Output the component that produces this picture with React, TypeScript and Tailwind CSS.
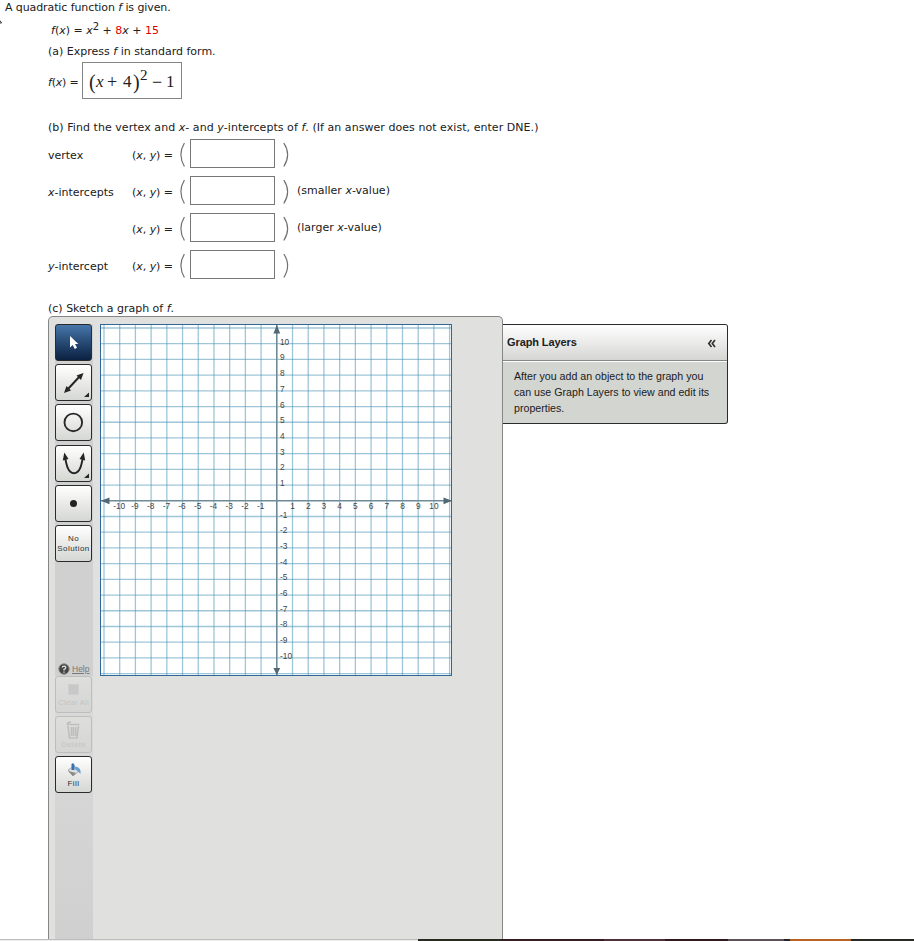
import type { ReactNode } from 'react';

const STEP = 15.71;
const CX = 176.8;
const CY = 176.8;
const TICKS = [-11, -10, -9, -8, -7, -6, -5, -4, -3, -2, -1, 1, 2, 3, 4, 5, 6, 7, 8, 9, 10, 11];

function Graph() {
  const labels = TICKS.filter((n) => Math.abs(n) < 11);
  return (
    <svg width="352" height="352" className="block shrink-0 bg-white">
      {TICKS.map((n) => (
        <g key={n} stroke="#4f97b8" strokeOpacity="0.55" strokeWidth="1.3">
          <line x1={CX + n * STEP} x2={CX + n * STEP} y1="0" y2="352" />
          <line y1={CY - n * STEP} y2={CY - n * STEP} x1="0" x2="352" />
        </g>
      ))}
      <g stroke="#6f8b97" strokeWidth="1.6">
        <line x1={CX} x2={CX} y1="0" y2="352" />
        <line y1={CY} y2={CY} x1="0" x2="352" />
      </g>
      <g fill="#526872">
        <path d="M1 176.8 L9.5 173.4 V180.2 Z" />
        <path d="M352 176.8 L343.5 173.4 V180.2 Z" />
        <path d="M176.8 1 L173.4 9.5 H180.2 Z" />
        <path d="M176.8 351 L173.4 344 H180.2 Z" />
      </g>
      <g fill="#444444" fontSize="8.3" fontFamily="'Liberation Sans', sans-serif">
        {labels.map((n) => (
          <text key={`x${n}`} x={CX + n * STEP + (n < 0 ? -0.5 : 0)} y="185.2" textAnchor="middle">
            {n}
          </text>
        ))}
        {labels.map((n) => (
          <text key={`y${n}`} x="180" y={CY - n * STEP + 1}>
            {n}
          </text>
        ))}
      </g>
      <rect x="0.5" y="0.5" width="351" height="351" fill="none" stroke="#2f6898" />
    </svg>
  );
}

function Tool({ children, className = '' }: { children: ReactNode; className?: string }) {
  return (
    <button
      className={`flex h-[37px] w-[37px] shrink-0 flex-col items-center justify-center rounded-[3px] border border-[#292b2c] bg-linear-to-b from-white to-[#d5d7d3] ${className}`}
    >
      {children}
    </button>
  );
}

function Row({ label, note }: { label?: ReactNode; note?: ReactNode }) {
  return (
    <div className="flex h-[37px] items-start">
      <div className="w-[84px] pt-[11px] leading-[20px]">{label}</div>
      <div className="w-[47px] pt-[11px] leading-[20px] tracking-[-0.05px]">
        (<i>x</i>, <i>y</i>) =
      </div>
      <svg width="11" height="37" className="shrink-0" fill="none" stroke="#707070" strokeWidth="1.2">
        <path d="M5.4 8 Q-1.6 19.5 5.4 31.5" />
      </svg>
      <input className="mt-[4px] h-[29px] w-[85px] border border-[#777] bg-white" />
      <svg width="22" height="37" className="shrink-0" fill="none" stroke="#707070" strokeWidth="1.2">
        <path d="M8.8 8 Q16.4 19.5 8.8 31.5" />
      </svg>
      <div className="pt-[9px] leading-[20px]">{note}</div>
    </div>
  );
}

export default function App() {
  return (
    <div className="flex h-[941px] w-[914px] flex-col overflow-hidden bg-white font-['DejaVu_Sans',sans-serif] text-[11px] text-[#202020]">
      <div className="h-[20px] whitespace-nowrap pl-[5px] leading-[15px] tracking-[-0.1px]">
        A quadratic function <i>f</i> is given.
      </div>
      <div className="flex h-[21px] items-start">
        <svg width="48" height="8" className="shrink-0">
          <path d="M0 0.5 L1.5 3 H0" fill="none" stroke="#333" />
        </svg>
        <div className="whitespace-pre pl-[3px] leading-[21px]">
          <i>f</i>(<i>x</i>) = <i>x</i>
          <span className="relative -top-[4px] text-[10px] leading-none">2</span> + <span className="text-[#e00000]">8</span>
          <i>x</i> + <span className="text-[#e00000]">15</span>
        </div>
      </div>
      <div className="h-[21px] pl-[48px] leading-[21px]">
        (a) Express <i>f</i> in standard form.
      </div>
      <div className="flex h-[56px] items-start pl-[48px]">
        <div className="w-[34px] whitespace-nowrap pt-[11px] leading-[20px] tracking-[-0.2px]">
          <i>f</i>(<i>x</i>) =
        </div>
        <div className="flex h-[37px] w-[100px] border border-[#858585] pl-[6px] font-['Liberation_Serif',serif] text-[17px] leading-[38px]">
          <span className="w-[7px] text-[20px]">(</span>
          <span className="w-[11px] italic">x</span>
          <span className="w-[16px] text-[18px]">+</span>
          <span className="w-[10px]">4</span>
          <span className="w-[7px] text-[20px]">)</span>
          <span className="w-[12px] text-[15px] leading-[25px]">2</span>
          <span className="w-[14px] text-[18px]">−</span>
          <span>1</span>
        </div>
      </div>
      <div className="h-[17px] whitespace-nowrap pl-[48px] leading-[20px] tracking-[0.05px]">
        (b) Find the vertex and <i>x</i>- and <i>y</i>-intercepts of <i>f</i>. (If an answer does not exist, enter DNE.)
      </div>
      <div className="flex h-[163px] flex-col whitespace-nowrap pl-[48px]">
        <Row label="vertex" />
        <Row label={<><i>x</i>-intercepts</>} note={<>(smaller <i>x</i>-value)</>} />
        <Row note={<>(larger <i>x</i>-value)</>} />
        <Row label={<><i>y</i>-intercept</>} />
      </div>
      <div className="h-[18px] pl-[48px] leading-[21px]">
        (c) Sketch a graph of <i>f</i>.
      </div>
      <div className="flex h-[623px] shrink-0 items-start pl-[48px]">
        <div className="flex h-[623px] w-[455px] shrink-0 rounded-t-[5px] border border-b-0 border-[#858787] bg-[#e0e0de] pl-[6px] pt-[7px]">
          <div className="mr-[7px] flex h-[615px] w-[38px] shrink-0 flex-col bg-[#d0d0d0] font-['Liberation_Sans',sans-serif]">
            <Tool className="from-[#4777ab]! to-[#0b2141]!">
              <svg width="35" height="35">
                <path d="M14 11 V22.5 L16.7 20 L18.8 24 L21 22.8 L19 19 H22.3 Z" fill="#fff" />
              </svg>
            </Tool>
            <Tool className="mt-[3px]">
              <svg width="35" height="35" fill="#252525">
                <path d="M11 25 L25 10" stroke="#252525" strokeWidth="2" />
                <path d="M8 28 L10.5 21 L15 25.5 Z M27.5 8 L25 15 L20.5 10.5 Z M33 27.5 V32 H28 Z" />
              </svg>
            </Tool>
            <Tool className="mt-[3px]">
              <svg width="35" height="35" fill="none">
                <circle cx="17.3" cy="17.4" r="8.8" stroke="#292929" strokeWidth="1.9" />
              </svg>
            </Tool>
            <Tool className="mt-[4px]">
              <svg width="35" height="35" fill="#252525">
                <path d="M9 11 C10.5 19 12 27.3 18 27.3 C24 27.3 25.5 19 27 11" fill="none" stroke="#252525" strokeWidth="1.9" />
                <path d="M8.3 6.5 L6.8 14.5 L12.5 13 Z M27.7 6.5 L23.5 13 L29.2 14.5 Z M33 27.5 V32 H28 Z" />
              </svg>
            </Tool>
            <Tool className="mt-[3px]">
              <span className="h-[7px] w-[7px] rounded-full bg-[#222]" />
            </Tool>
            <Tool className="mt-[3px] pt-[1px] text-[8px] leading-[10px] tracking-[0.45px] text-[#303030]">
              <span>No</span>
              <span>Solution</span>
            </Tool>
            <div className="mt-[101px] flex h-[12px] items-center pl-[3px] text-[8.5px] leading-[10px] text-[#777]">
              <svg width="12" height="12" className="mr-[2px]">
                <circle cx="6" cy="6" r="5.2" fill="#444" stroke="#888" />
                <path d="M4.2 4.7 Q4.4 3.1 6 3.1 Q8 3.2 7.7 4.8 Q7.5 5.8 6 6.3 V7.4 M6 8.5 V9.7" stroke="#ddd" fill="none" strokeWidth="1.3" />
              </svg>
              <span className="underline">Help</span>
            </div>
            <div className="mt-[1px] flex flex-1 flex-col bg-linear-to-b from-[#dadada] to-[#d0d0d0]">
              <Tool className="border-[#bdbfbf]! from-[#dededc]! to-[#d5d5d3]! text-[8px] leading-[10px] tracking-[0.1px] text-[#c5c5c5]">
                <span className="mb-[3px] mt-[2px] h-[11px] w-[11px] border border-[#cfcfcf] bg-[#c8c8c8]" />
                <span className="whitespace-nowrap">Clear All</span>
              </Tool>
              <Tool className="mt-[3px] border-[#bdbfbf]! from-[#dededc]! to-[#d5d5d3]! text-[8px] leading-[10px] tracking-[0.3px] text-[#c5c5c5]">
                <svg width="17" height="20" fill="none" stroke="#bebebe" strokeWidth="1.6">
                  <path d="M1.5 4.5 H14.5 M2 3 L6 2 M3 6 L4.5 18 H12 L13.5 6 M6.5 7 V16 M8.5 7 V16 M10.7 7 V16" />
                </svg>
                <span>Delete</span>
              </Tool>
              <Tool className="mt-[3px] pt-[2px] text-[8px] leading-[10px] tracking-[0.5px] text-[#303030]">
                <svg width="17" height="16">
                  <path d="M3 8 L9 4 L14 9 L8 14 Z" fill="#ddd" stroke="#888" strokeWidth="0.6" />
                  <path d="M3 9 L8 14 L11 11" fill="#888" />
                  <path d="M6.5 2 Q8.3 0 9.5 3 V8 H6.5 Z" fill="#3472b4" />
                  <path d="M10 4.5 Q16.5 5 15.5 12 L13 9.5 L10 7 Z" fill="#699fce" />
                </svg>
                <span className="mt-[1px]">Fill</span>
              </Tool>
            </div>
          </div>
          <Graph />
        </div>
        <div className="mt-[8px] h-[100px] w-[225px] overflow-hidden rounded-r-[3px] border border-l-0 border-[#292b2c] bg-[#d3d5d1] font-['Liberation_Sans',sans-serif] text-[#202020]">
          <div className="flex h-[36px] items-center justify-between border-b border-[#858787] bg-linear-to-b from-white to-[#d5d6d4] pl-[4px] pr-[11px] text-[11px] font-bold tracking-[-0.1px]">
            <span>Graph Layers</span>
            <svg width="9" height="9" className="mt-[2px]" fill="none" stroke="#333" strokeWidth="1.7">
              <path d="M4.5 1 L1.8 4.5 L4.5 8 M8 1 L5.3 4.5 L8 8" />
            </svg>
          </div>
          <div className="whitespace-nowrap border-t border-white pl-[11px] pt-[6px] text-[10.65px] leading-[16px]">
            <div>After you add an object to the graph you</div>
            <div>can use Graph Layers to view and edit its</div>
            <div>properties.</div>
          </div>
        </div>
      </div>
      <div className="flex h-[2px] shrink-0">
        <div className="w-[418px] border-t border-[#bcbcbc] bg-[#eee]" />
        <div className="w-[83px] bg-[#292b20]" />
        <div className="w-[103px] bg-[#351d21]" />
        <div className="w-[61px] bg-[#503139]" />
        <div className="w-[63px] bg-[#32191e]" />
        <div className="w-[56px] bg-[#5c5157]" />
        <div className="w-[6px] bg-[#292227]" />
        <div className="w-[61px] bg-[#b86122]" />
        <div className="w-[63px] bg-[#282923]" />
      </div>
    </div>
  );
}
